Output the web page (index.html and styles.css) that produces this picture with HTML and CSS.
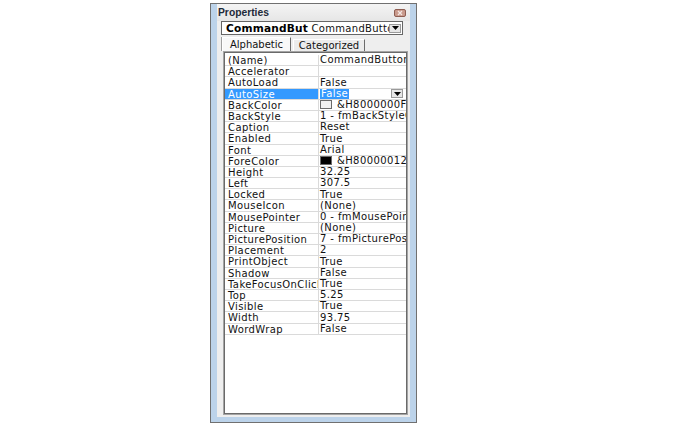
FILE: index.html
```html
<!DOCTYPE html>
<html>
<head>
<meta charset="utf-8">
<link rel="stylesheet" href="styles.css">
</head>
<body>
<div class="window">
  <div class="client">
    <div class="titlebar">
      <span class="title">Properties</span>
      <svg class="close" width="12" height="8" viewBox="0 0 12 8">
        <rect x="0.5" y="0.5" width="11" height="7" rx="1.5" fill="#c99a8c" stroke="#8e5e52"/>
        <path d="M4 2 L8 6 M8 2 L4 6" stroke="#f4e6e2" stroke-width="1.3"/>
      </svg>
    </div>
    <div class="combo">
      <span class="obj"><b>CommandBut</b> CommandButton</span>
      <span class="ddbtn"><svg width="7" height="4" viewBox="0 0 7 4"><path d="M0 0 H7 L3.5 4 Z" fill="#000"/></svg></span>
    </div>
    <div class="tabs">
      <div class="tab active">Alphabetic</div>
      <div class="tab">Categorized</div>
    </div>
    <div class="grid">
      <div class="rows">
        <div class="row"><div class="name">(Name)</div><div class="val">CommandButton1</div></div>
        <div class="row"><div class="name">Accelerator</div><div class="val"></div></div>
        <div class="row"><div class="name">AutoLoad</div><div class="val">False</div></div>
        <div class="row sel"><div class="name">AutoSize</div><div class="val"><span class="hl">False</span><span class="vdd"><svg width="7" height="4" viewBox="0 0 7 4"><path d="M0 0 H7 L3.5 4 Z" fill="#000"/></svg></span></div></div>
        <div class="row"><div class="name">BackColor</div><div class="val"><span class="sw light"></span>&amp;H8000000F&amp;</div></div>
        <div class="row"><div class="name">BackStyle</div><div class="val">1 - fmBackStyleOpaque</div></div>
        <div class="row"><div class="name">Caption</div><div class="val">Reset</div></div>
        <div class="row"><div class="name">Enabled</div><div class="val">True</div></div>
        <div class="row"><div class="name">Font</div><div class="val">Arial</div></div>
        <div class="row"><div class="name">ForeColor</div><div class="val"><span class="sw dark"></span>&amp;H80000012&amp;</div></div>
        <div class="row"><div class="name">Height</div><div class="val">32.25</div></div>
        <div class="row"><div class="name">Left</div><div class="val">307.5</div></div>
        <div class="row"><div class="name">Locked</div><div class="val">True</div></div>
        <div class="row"><div class="name">MouseIcon</div><div class="val">(None)</div></div>
        <div class="row"><div class="name">MousePointer</div><div class="val">0 - fmMousePointerDefault</div></div>
        <div class="row"><div class="name">Picture</div><div class="val">(None)</div></div>
        <div class="row"><div class="name">PicturePosition</div><div class="val">7 - fmPicturePositionAboveCenter</div></div>
        <div class="row"><div class="name">Placement</div><div class="val">2</div></div>
        <div class="row"><div class="name">PrintObject</div><div class="val">True</div></div>
        <div class="row"><div class="name">Shadow</div><div class="val">False</div></div>
        <div class="row"><div class="name">TakeFocusOnClick</div><div class="val">True</div></div>
        <div class="row"><div class="name">Top</div><div class="val">5.25</div></div>
        <div class="row"><div class="name">Visible</div><div class="val">True</div></div>
        <div class="row"><div class="name">Width</div><div class="val">93.75</div></div>
        <div class="row"><div class="name">WordWrap</div><div class="val">False</div></div>
      </div>
    </div>
  </div>
</div>
</body>
</html>
```
FILE: styles.css
```css
body {
  margin: 0;
  background: #ffffff;
  font-family: "DejaVu Sans", Verdana, sans-serif;
  font-size: 10px;
  color: #111111;
}

.window {
  box-sizing: border-box;
  width: 207px;
  height: 420px;
  margin: 3px 0 0 210px;
  border: 1px solid #707070;
  background: #bcd3ea;
  padding: 0 6px 5px 6px;
  display: flex;
  flex-direction: column;
}

.client {
  flex: 1;
  min-height: 0;
  background: #eeeeee;
  display: flex;
  flex-direction: column;
}

.titlebar {
  height: 17px;
  flex: none;
  display: flex;
  align-items: center;
  justify-content: space-between;
  padding: 0 4px 0 1px;
  background: linear-gradient(#f4f4f4, #e6e6e6);
}

.title {
  font-family: "Liberation Sans", Arial, sans-serif;
  font-weight: bold;
  font-size: 10.3px;
  color: #1e2a3a;
}

.close {
  display: block;
}

.combo {
  flex: none;
  box-sizing: border-box;
  height: 14px;
  width: 182px;
  margin-left: 4px;
  border: 1px solid #666666;
  background: #ffffff;
  display: flex;
  align-items: center;
}

.combo .obj {
  flex: 1;
  min-width: 0;
  overflow: hidden;
  white-space: nowrap;
  padding-left: 4px;
  line-height: 12px;
  letter-spacing: 0.3px;
}

.combo b {
  font-size: 10.6px;
  letter-spacing: 0.2px;
  color: #000;
}

.ddbtn, .vdd {
  flex: none;
  box-sizing: border-box;
  width: 12px;
  height: 9px;
  margin-right: 1px;
  background: #e6e6e6;
  border: 1px solid #9a9a9a;
  display: flex;
  align-items: center;
  justify-content: center;
}

.tabs {
  flex: none;
  display: flex;
  align-items: flex-end;
  gap: 2px;
  height: 14px;
  margin: 2px 0 0 5px;
}

.tab {
  box-sizing: border-box;
  height: 12px;
  line-height: 11px;
  text-align: center;
  border-left: 1px solid #ffffff;
  border-top: 1px solid #ffffff;
  border-right: 1px solid #6b6b6b;
  background: #ececec;
  color: #111;
}

.tab.active {
  width: 69px;
  height: 14px;
  line-height: 13px;
  background: #f8f8f8;
  box-shadow: -1px 0 0 #a0a0a0;
}

.tab:not(.active) {
  width: 72px;
}

.grid {
  flex: 1;
  min-height: 0;
  margin: 0 2px 2px 6px;
  border: 1px solid #a4a4a4;
  display: flex;
}

.rows {
  flex: 1;
  border: 1px solid #6a6a6a;
  background: #ffffff;
  padding-top: 2px;
  overflow: hidden;
}

.row {
  box-sizing: border-box;
  height: 11.2px;
  display: flex;
  border-bottom: 1px solid #dadada;
}

.name {
  box-sizing: border-box;
  flex: none;
  width: 94px;
  padding-left: 3px;
  border-right: 1px solid #dadada;
  overflow-x: clip;
  white-space: nowrap;
  line-height: 11.6px;
  letter-spacing: 0.4px;
}

.val {
  flex: 1;
  min-width: 0;
  padding-left: 1px;
  overflow-x: clip;
  white-space: nowrap;
  line-height: 11.6px;
  letter-spacing: 0.4px;
  display: flex;
  align-items: center;
}

.row.sel .name {
  background: #3399ff;
  color: #ffffff;
}

.hl {
  background: #3399ff;
  color: #ffffff;
  padding: 0 1px;
  line-height: 10px;
}

.vdd {
  margin-left: auto;
  margin-right: 3px;
}

.sw {
  flex: none;
  box-sizing: border-box;
  width: 12px;
  height: 9px;
  margin: 0 5px 0 0;
  border: 1px solid #6a6a6a;
}

.sw.light {
  background: #f0f0f0;
}

.sw.dark {
  background: #000000;
}
```
